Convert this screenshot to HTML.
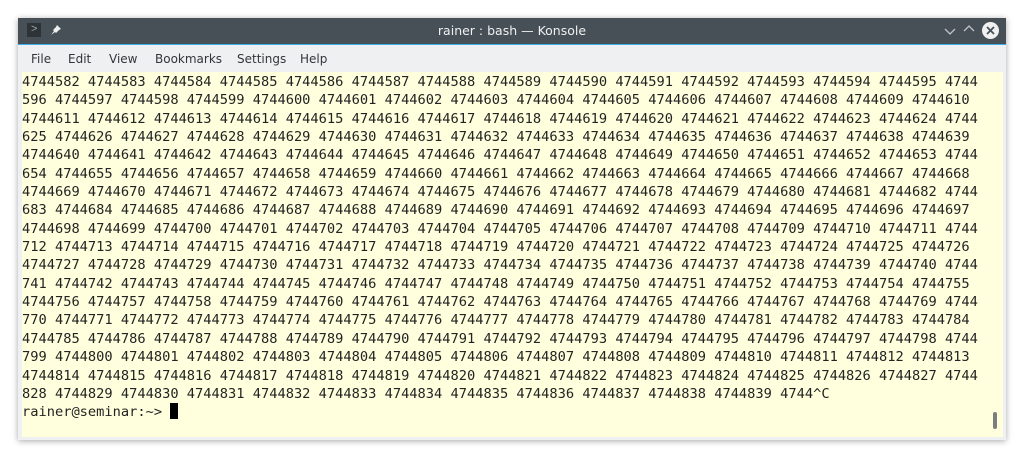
<!DOCTYPE html>
<html><head><meta charset="utf-8"><style>
html,body{margin:0;padding:0;width:1024px;height:459px;background:#fff;overflow:hidden}
.win{position:absolute;left:18px;top:18px;width:988px;height:422px;background:#eff0f1;box-shadow:0 1px 6px rgba(0,0,0,.35)}
.title{position:absolute;left:0;top:0;width:988px;height:26px;background:#475057;border-bottom:1px solid #3daee9;}
.title .t{position:absolute;left:0;right:0;top:5px;text-align:center;color:#eff0f1;font:12.5px "DejaVu Sans","Liberation Sans",sans-serif}
.menu{position:absolute;left:0;top:27px;height:27px;font:12px "DejaVu Sans","Liberation Sans",sans-serif;color:#31363b}
.menu span{position:absolute;top:7px;white-space:nowrap}
.term{position:absolute;left:4px;top:54px;width:981px;height:365px;background:#ffffdd}
pre{margin:0;position:absolute;left:0;top:1px;font:13.7px/18.35px "DejaVu Sans Mono","Liberation Mono",monospace;color:#232323}
.cur{display:inline-block;width:8px;height:16px;background:#000;vertical-align:-3px}
.sb{position:absolute;left:971px;top:340px;width:4px;height:17px;background:#7d7d7d;border-radius:2px}
</style></head><body>
<div class="win">
 <div class="title">
  <div style="position:absolute;left:9px;top:5px;width:14px;height:14px;background:#2e3338;"></div>
  <div style="position:absolute;left:13px;top:5px;color:#9aa;font:11px sans-serif">&gt;</div>
  <svg style="position:absolute;left:32px;top:6px" width="12" height="12" viewBox="0 0 12 12"><path d="M7 1 L11 5 L9 6 L6 9 L5 8 L1 11 L4 7 L3 6 L6 3 Z" fill="#eff0f1"/></svg>
  <div class="t">rainer : bash — Konsole</div>
  <svg style="position:absolute;left:926px;top:7px" width="12" height="12" viewBox="0 0 12 12"><path d="M1 4 L6 9 L11 4" stroke="#bfc4c8" fill="none" stroke-width="1.3"/></svg>
  <svg style="position:absolute;left:945px;top:5px" width="12" height="12" viewBox="0 0 12 12"><path d="M1 8 L6 3 L11 8" stroke="#bfc4c8" fill="none" stroke-width="1.3"/></svg>
  <div style="position:absolute;left:964px;top:4px;width:17px;height:17px;border-radius:50%;background:#f0f0f0;overflow:hidden"><svg width="17" height="17" viewBox="0 0 17 17"><path d="M5 5 L12 12 M12 5 L5 12" stroke="#475057" stroke-width="1.8"/></svg></div>
 </div>
 <div class="menu"><span style="left:13px">File</span><span style="left:50px">Edit</span><span style="left:91px">View</span><span style="left:137px">Bookmarks</span><span style="left:219px">Settings</span><span style="left:282px">Help</span></div>
 <div class="term"><pre>4744582 4744583 4744584 4744585 4744586 4744587 4744588 4744589 4744590 4744591 4744592 4744593 4744594 4744595 4744
596 4744597 4744598 4744599 4744600 4744601 4744602 4744603 4744604 4744605 4744606 4744607 4744608 4744609 4744610
4744611 4744612 4744613 4744614 4744615 4744616 4744617 4744618 4744619 4744620 4744621 4744622 4744623 4744624 4744
625 4744626 4744627 4744628 4744629 4744630 4744631 4744632 4744633 4744634 4744635 4744636 4744637 4744638 4744639
4744640 4744641 4744642 4744643 4744644 4744645 4744646 4744647 4744648 4744649 4744650 4744651 4744652 4744653 4744
654 4744655 4744656 4744657 4744658 4744659 4744660 4744661 4744662 4744663 4744664 4744665 4744666 4744667 4744668
4744669 4744670 4744671 4744672 4744673 4744674 4744675 4744676 4744677 4744678 4744679 4744680 4744681 4744682 4744
683 4744684 4744685 4744686 4744687 4744688 4744689 4744690 4744691 4744692 4744693 4744694 4744695 4744696 4744697
4744698 4744699 4744700 4744701 4744702 4744703 4744704 4744705 4744706 4744707 4744708 4744709 4744710 4744711 4744
712 4744713 4744714 4744715 4744716 4744717 4744718 4744719 4744720 4744721 4744722 4744723 4744724 4744725 4744726
4744727 4744728 4744729 4744730 4744731 4744732 4744733 4744734 4744735 4744736 4744737 4744738 4744739 4744740 4744
741 4744742 4744743 4744744 4744745 4744746 4744747 4744748 4744749 4744750 4744751 4744752 4744753 4744754 4744755
4744756 4744757 4744758 4744759 4744760 4744761 4744762 4744763 4744764 4744765 4744766 4744767 4744768 4744769 4744
770 4744771 4744772 4744773 4744774 4744775 4744776 4744777 4744778 4744779 4744780 4744781 4744782 4744783 4744784
4744785 4744786 4744787 4744788 4744789 4744790 4744791 4744792 4744793 4744794 4744795 4744796 4744797 4744798 4744
799 4744800 4744801 4744802 4744803 4744804 4744805 4744806 4744807 4744808 4744809 4744810 4744811 4744812 4744813
4744814 4744815 4744816 4744817 4744818 4744819 4744820 4744821 4744822 4744823 4744824 4744825 4744826 4744827 4744
828 4744829 4744830 4744831 4744832 4744833 4744834 4744835 4744836 4744837 4744838 4744839 4744^C
rainer@seminar:~&gt; <span class="cur"></span></pre><div class="sb"></div></div>
</div>
</body></html>
